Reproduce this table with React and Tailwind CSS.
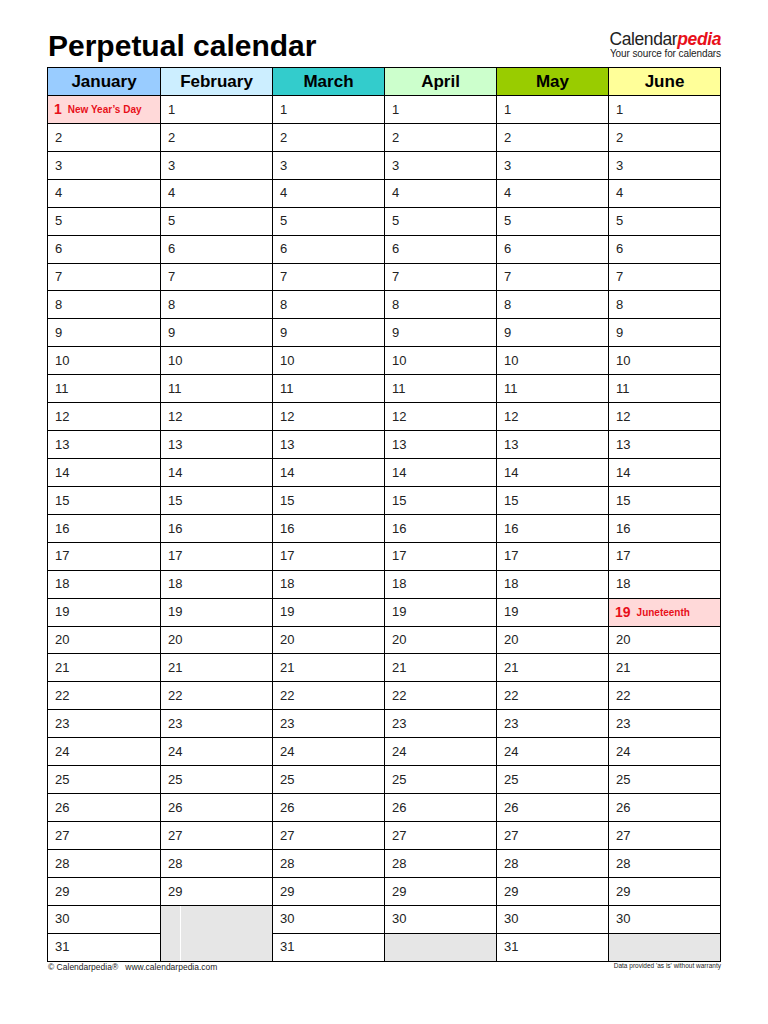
import React from 'react';

const months = [
  { name: 'January', days: 31, bg: 'bg-[#99ccff]' },
  { name: 'February', days: 29, bg: 'bg-[#cceeff]' },
  { name: 'March', days: 31, bg: 'bg-[#33cccc]' },
  { name: 'April', days: 30, bg: 'bg-[#ccffcc]' },
  { name: 'May', days: 31, bg: 'bg-[#99cc00]' },
  { name: 'June', days: 30, bg: 'bg-[#ffff99]' },
];

const holidays = {
  '0-1': 'New Year\u2019s Day',
  '5-19': 'Juneteenth',
};

const font = { fontFamily: '"Liberation Sans", Arial, sans-serif' };

const DayCell = ({ m, d }) => {
  const holiday = holidays[`${m}-${d}`];
  if (holiday) {
    return (
      <div className="flex items-center gap-[6px] pl-[6px] border-r border-b border-black bg-[#ffd9d9] text-[#e8101a]">
        <span className="text-[14px] font-bold">{d}</span>
        <span className="text-[10px] font-bold">{holiday}</span>
      </div>
    );
  }
  return (
    <div className="flex items-center pl-[7px] border-r border-b border-black text-[13px] text-[#222]">
      {d}
    </div>
  );
};

export default function App() {
  const cells = [];
  for (let d = 1; d <= 31; d++) {
    months.forEach((mo, m) => {
      if (d <= mo.days) {
        cells.push(<DayCell key={`${m}-${d}`} m={m} d={d} />);
      } else if (m === 1 && d === 30) {
        cells.push(
          <div key="feb-empty" className="row-span-2 flex border-r border-b border-black bg-[#e6e6e6]">
            <div className="w-[20px] border-r border-white" />
          </div>
        );
      } else if (m !== 1) {
        cells.push(<div key={`${m}-${d}`} className="border-r border-b border-black bg-[#e6e6e6]" />);
      }
    });
  }

  return (
    <div className="w-[768px] h-[1024px] bg-white text-black" style={font}>
      <div className="ml-[47px] w-[674px] pt-[31px]">
        <div className="flex justify-between items-start h-[36px]">
          <h1 className="text-[30px] leading-none font-bold pl-[1px]">Perpetual calendar</h1>
          <div className="flex flex-col items-end -mt-[2px]">
            <div className="text-[17.5px] leading-[20px] text-[#222] tracking-[-0.4px] whitespace-nowrap">
              Calendar<span className="font-bold italic text-[#e8101a]">pedia</span>
            </div>
            <div className="text-[10px] leading-[10px] text-[#222] tracking-[-0.1px] whitespace-nowrap">
              Your source for calendars
            </div>
          </div>
        </div>
        <div className="grid grid-cols-[113px_112px_112px_112px_112px_112px] grid-rows-[28px] auto-rows-[27.93px] border-l border-t border-black">
          {months.map((mo) => (
            <div
              key={mo.name}
              className={`${mo.bg} flex items-center justify-center border-r border-b border-black text-[17px] font-bold`}
            >
              {mo.name}
            </div>
          ))}
          {cells}
        </div>
        <div className="flex justify-between items-start">
          <div className="text-[8.5px] leading-[10px] pl-[1px] text-[#222]">
            © Calendarpedia®&nbsp;&nbsp;&nbsp;www.calendarpedia.com
          </div>
          <div className="text-[6.5px] leading-[8px] text-[#222]">Data provided 'as is' without warranty</div>
        </div>
      </div>
    </div>
  );
}
